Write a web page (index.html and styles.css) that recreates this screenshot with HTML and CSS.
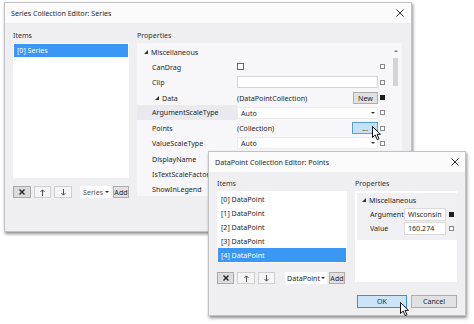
FILE: index.html
```html
<!DOCTYPE html>
<html lang="en">
<head>
  <meta charset="UTF-8">
  <title>Series Collection Editor</title>
  <link rel="stylesheet" href="styles.css">
</head>
<body>
  <!-- main dialog -->
  <div class="window window-series">
    <div class="titlebar">
      <span>Series Collection Editor: Series</span>
      <svg class="close" width="8" height="8" viewBox="0 0 8 8"><path d="M0.5 0.5L7.5 7.5M7.5 0.5L0.5 7.5" stroke="#333" stroke-width="1"/></svg>
    </div>
    <div class="series-body">
      <div class="column">
        <div class="label">Items</div>
        <div class="list list-series">
          <div class="list-row selected">[0] Series</div>
        </div>
        <div class="toolbar">
          <div class="tool tool-delete w18"><svg width="6" height="6" viewBox="0 0 6 6"><path d="M0.5 0.5L5.5 5.5M5.5 0.5L0.5 5.5" stroke="#222" stroke-width="1.4"/></svg></div>
          <div class="tool w17"><svg width="5" height="7" viewBox="0 0 5 7"><path d="M2.5 1V7M0.5 3L2.5 0.8L4.5 3" stroke="#555" stroke-width="1" fill="none"/></svg></div>
          <div class="tool w18"><svg width="5" height="7" viewBox="0 0 5 7"><path d="M2.5 0V6M0.5 4L2.5 6.2L4.5 4" stroke="#555" stroke-width="1" fill="none"/></svg></div>
          <div class="combo combo-series">Series<span class="drop"></span></div>
          <div class="add">Add</div>
        </div>
      </div>
      <div class="column">
        <div class="label">Properties</div>
        <div class="pg">
          <div class="pg-rows">
            <div class="pg-row"><div class="pg-cat"><span class="expander"></span>Miscellaneous</div></div>
            <div class="pg-row">
              <div class="pg-name">CanDrag</div>
              <div class="pg-value"><span class="check"></span></div>
              <span class="mark"></span>
            </div>
            <div class="pg-row">
              <div class="pg-name">Clip</div>
              <div class="pg-value"><div class="textbox"></div></div>
              <span class="mark"></span>
            </div>
            <div class="pg-row">
              <div class="pg-name pg-sub"><span class="expander"></span>Data</div>
              <div class="pg-value split">(DataPointCollection)<span class="btn btn-new">New</span></div>
              <span class="mark set"></span>
            </div>
            <div class="pg-row current">
              <div class="pg-name">ArgumentScaleType</div>
              <div class="pg-value"><div class="combo combo-wide">Auto<span class="drop"></span></div></div>
              <span class="mark"></span>
            </div>
            <div class="pg-row">
              <div class="pg-name">Points</div>
              <div class="pg-value split">(Collection)<span class="btn btn-dots">...</span></div>
              <span class="mark"></span>
            </div>
            <div class="pg-row">
              <div class="pg-name">ValueScaleType</div>
              <div class="pg-value"><div class="combo combo-wide">Auto<span class="drop"></span></div></div>
              <span class="mark"></span>
            </div>
            <div class="pg-row">
              <div class="pg-name">DisplayName</div>
              <div class="pg-value"></div>
              <span class="mark"></span>
            </div>
            <div class="pg-row">
              <div class="pg-name">IsTextScaleFactor</div>
              <div class="pg-value"></div>
              <span class="mark"></span>
            </div>
            <div class="pg-row">
              <div class="pg-name">ShowInLegend</div>
              <div class="pg-value"></div>
              <span class="mark"></span>
            </div>
          </div>
          <div class="scrollbar">
            <span class="scroll-up"></span>
            <span class="scroll-thumb"></span>
          </div>
        </div>
      </div>
    </div>
  </div>

  <!-- nested dialog -->
  <div class="window window-points">
    <div class="titlebar">
      <span>DataPoint Collection Editor: Points</span>
      <svg class="close" width="8" height="8" viewBox="0 0 8 8"><path d="M0.5 0.5L7.5 7.5M7.5 0.5L0.5 7.5" stroke="#333" stroke-width="1"/></svg>
    </div>
    <div class="points-body">
      <div class="column">
        <div class="label">Items</div>
        <div class="list list-points">
          <div class="list-row">[0] DataPoint</div>
          <div class="list-row">[1] DataPoint</div>
          <div class="list-row">[2] DataPoint</div>
          <div class="list-row">[3] DataPoint</div>
          <div class="list-row selected">[4] DataPoint</div>
        </div>
        <div class="toolbar toolbar-points">
          <div class="tool tool-delete w17"><svg width="6" height="6" viewBox="0 0 6 6"><path d="M0.5 0.5L5.5 5.5M5.5 0.5L0.5 5.5" stroke="#222" stroke-width="1.4"/></svg></div>
          <div class="tool w18"><svg width="5" height="7" viewBox="0 0 5 7"><path d="M2.5 1V7M0.5 3L2.5 0.8L4.5 3" stroke="#555" stroke-width="1" fill="none"/></svg></div>
          <div class="tool w17"><svg width="5" height="7" viewBox="0 0 5 7"><path d="M2.5 0V6M0.5 4L2.5 6.2L4.5 4" stroke="#555" stroke-width="1" fill="none"/></svg></div>
          <div class="combo combo-point">DataPoint<span class="drop"></span></div>
          <div class="add">Add</div>
        </div>
      </div>
      <div class="column">
        <div class="label">Properties</div>
        <div class="pp">
          <div class="pp-rows">
            <div class="pp-row"><div class="pp-cat"><span class="expander"></span>Miscellaneous</div></div>
            <div class="pp-row">
              <div class="pp-name">Argument</div>
              <div class="textbox small">Wisconsin</div>
              <span class="mark set"></span>
            </div>
            <div class="pp-row">
              <div class="pp-name">Value</div>
              <div class="textbox small">160.274</div>
              <span class="mark"></span>
            </div>
          </div>
        </div>
      </div>
    </div>
    <div class="footer">
      <div class="button button-ok">OK</div>
      <div class="button button-cancel">Cancel</div>
    </div>
  </div>

  <!-- mouse pointers -->
  <svg class="cursor cursor-dots" width="10" height="15" viewBox="0 0 10 15"><path d="M0.5 0.5V11.5L3.2 9L5.2 13.6L7 12.8L5 8.3H8.5Z" fill="#fff" stroke="#111" stroke-width="1" stroke-linejoin="round"/></svg>
  <svg class="cursor cursor-ok" width="10" height="15" viewBox="0 0 10 15"><path d="M0.5 0.5V11.5L3.2 9L5.2 13.6L7 12.8L5 8.3H8.5Z" fill="#fff" stroke="#111" stroke-width="1" stroke-linejoin="round"/></svg>
</body>
</html>
```

FILE: styles.css
```css
* {
  box-sizing: border-box;
  margin: 0;
  padding: 0;
}

body {
  font-family: "Segoe UI", "Noto Sans", sans-serif;
  font-size: 7.1px;
  color: #262626;
  background-color: #fff;
  width: 474px;
  height: 324px;
  position: relative;
  overflow: hidden;
}

/* windows */
.window {
  position: absolute;
  background-color: #efeff2;
  border: 1px solid #c2c2c4;
  box-shadow: 1px 2px 3px rgba(0,0,0,0.45);
  display: flex;
  flex-direction: column;
}

.window-series {
  left: 4px;
  top: 2px;
  width: 408px;
  height: 230px;
}

.window-points {
  left: 208px;
  top: 151px;
  width: 258px;
  height: 165px;
}

.titlebar {
  flex: none;
  height: 20px;
  background-color: #fbfbfb;
  display: flex;
  align-items: center;
  justify-content: space-between;
  padding: 0 7px 0 6px;
}

.window-points .titlebar {
  padding: 0 6px 0 6px;
}

.label {
  height: 12px;
  line-height: 12px;
  margin-bottom: 2px;
  color: #333;
}

.column {
  display: flex;
  flex-direction: column;
}

/* series dialog */
.series-body {
  display: grid;
  grid-template-columns: 116px 265px;
  column-gap: 8px;
  padding: 6px 0 0 8px;
}

.list {
  background-color: #fff;
  padding: 1px 1px;
}

.list-series {
  height: 135px;
}

.list-row {
  height: 13px;
  line-height: 13px;
  padding-left: 3px;
  white-space: nowrap;
}

.list-points .list-row {
  height: 14px;
  line-height: 14px;
}

.list-row.selected {
  background-color: #3a98f4;
  color: #fff;
}

.toolbar {
  display: flex;
  align-items: center;
  height: 12px;
  margin-top: 8px;
}

.tool {
  height: 12px;
  border: 1px solid #cfcfcf;
  background-color: #f5f5f5;
  display: flex;
  align-items: center;
  justify-content: center;
  margin-right: 3px;
}

.w17 { width: 17px; }
.w18 { width: 18px; }

.tool-delete {
  background-color: #dcdcdc;
  border-color: #a9a9a9;
}

.combo {
  height: 12px;
  background-color: #fff;
  display: flex;
  align-items: center;
  justify-content: space-between;
  padding: 0 2px 0 3px;
  white-space: nowrap;
}

.drop {
  width: 0;
  height: 0;
  border-left: 2px solid transparent;
  border-right: 2px solid transparent;
  border-top: 2px solid #333;
}

.combo-series {
  width: 31px;
  margin-left: 5px;
  color: #555;
}

.combo-point {
  width: 42px;
  margin-left: 7px;
  padding-left: 2px;
  color: #222;
}

.add {
  width: 16px;
  height: 12px;
  line-height: 10px;
  margin-left: 2px;
  text-align: center;
  background-color: #e1e1e1;
  border: 1px solid #adadad;
}

/* property grid */
.pg {
  display: flex;
  height: 153px;
  background-color: #f7f7f9;
}

.pg-rows {
  flex: 1;
  padding-top: 1px;
}

.pg-row {
  display: grid;
  grid-template-columns: 100px 141px 11px;
  align-items: center;
  height: 15.3px;
}

.pg-row.current .pg-name {
  background-color: #e9e9ee;
  height: 15.3px;
  line-height: 15.3px;
}

.pg-cat {
  grid-column: 1 / -1;
  display: flex;
  align-items: center;
  padding-left: 7px;
}

.expander {
  display: inline-block;
  width: 0;
  height: 0;
  border-style: solid;
  border-width: 0 0 4px 4px;
  border-color: transparent transparent #333 transparent;
  margin-right: 3px;
}

.pg-name {
  padding-left: 15px;
  white-space: nowrap;
  overflow: hidden;
}

.pg-sub {
  display: flex;
  align-items: center;
  padding-left: 18px;
}

.pg-value {
  display: flex;
  align-items: center;
  white-space: nowrap;
}

.pg-value.split {
  justify-content: space-between;
}

.check {
  width: 7px;
  height: 7px;
  border: 1px solid #666;
  background-color: #fff;
}

.textbox {
  width: 100%;
  height: 12px;
  background-color: #fff;
  border: 1px solid #d4d4d4;
}

.combo-wide {
  width: 100%;
  border: 1px solid #ececec;
}

.btn {
  height: 12px;
  width: 25px;
  display: flex;
  align-items: center;
  justify-content: center;
}

.btn-new {
  background-color: #e1e1e1;
  border: 1px solid #adadad;
}

.btn-dots {
  width: 26px;
  background-color: #c4e1f8;
  border: 1px solid #5a9fd6;
  line-height: 8px;
}

.mark {
  width: 5px;
  height: 5px;
  margin-left: 2px;
  border: 1px solid #8a8a8a;
  background-color: #fff;
}

.mark.set {
  background-color: #1e1e1e;
  border-color: #1e1e1e;
}

.scrollbar {
  width: 13px;
  display: flex;
  flex-direction: column;
  align-items: center;
  padding-top: 7px;
}

.scroll-up {
  width: 0;
  height: 0;
  border-left: 2px solid transparent;
  border-right: 2px solid transparent;
  border-bottom: 2px solid #777;
}

.scroll-thumb {
  width: 5px;
  height: 28px;
  margin-top: 6px;
  background-color: #d4d4d8;
}

/* points dialog */
.points-body {
  display: grid;
  grid-template-columns: 130px 102px;
  column-gap: 8px;
  padding: 5px 8px 0 8px;
}

.list-points {
  height: 72px;
}

.toolbar-points {
  margin-top: 9px;
}

.pp {
  height: 91px;
  background-color: #fff;
  padding: 2px 0 0 2px;
}

.pp-rows {
  background-color: #f0f0f2;
  padding-bottom: 5px;
}

.pp-row {
  display: grid;
  grid-template-columns: 47px 42px 11px;
  align-items: center;
  height: 14px;
}

.pp-cat {
  grid-column: 1 / -1;
  display: flex;
  align-items: center;
  padding-left: 5px;
}

.pp-name {
  padding-left: 13px;
  white-space: nowrap;
}

.textbox.small {
  height: 13px;
  line-height: 11px;
  padding-left: 3px;
  border-color: #dadada;
  white-space: nowrap;
  overflow: hidden;
}

.pp-row .mark {
  margin-left: 3px;
}

.footer {
  display: flex;
  justify-content: flex-end;
  gap: 4px;
  padding: 11px 8px 0 0;
}

.button {
  height: 13px;
  line-height: 11px;
  text-align: center;
}

.button-ok {
  width: 50px;
  background-color: #cce4f7;
  border: 1px solid #3c8ed6;
}

.button-cancel {
  width: 46px;
  background-color: #e1e1e1;
  border: 1px solid #adadad;
}

/* pointers */
.cursor {
  position: absolute;
}

.cursor-dots {
  left: 372px;
  top: 126px;
}

.cursor-ok {
  left: 400px;
  top: 302px;
}
```
